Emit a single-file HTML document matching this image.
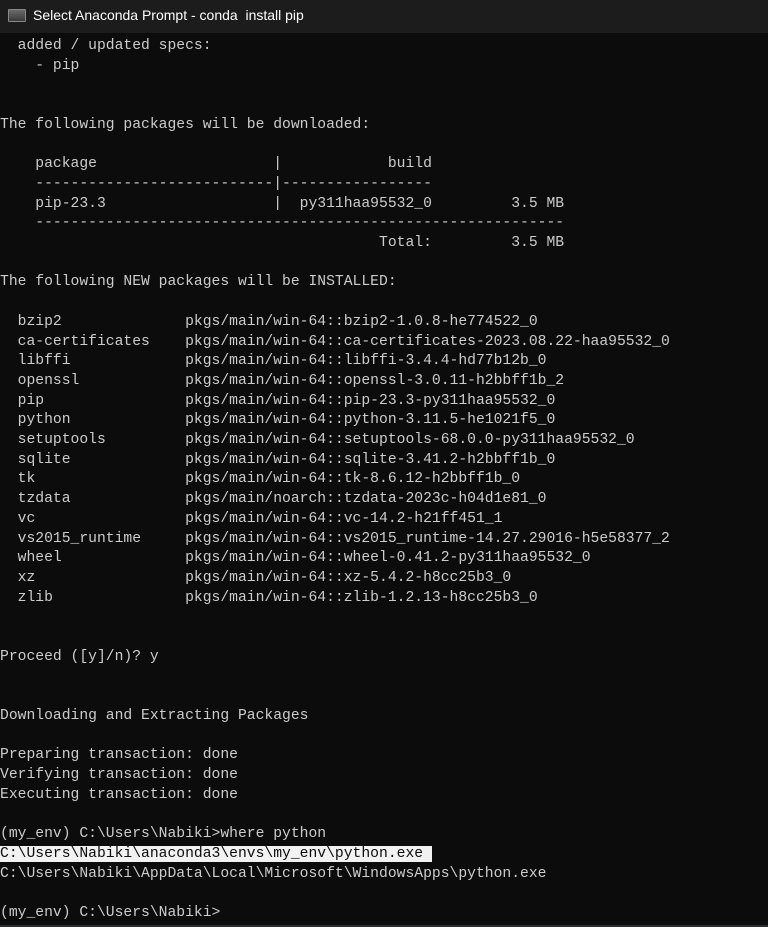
<!DOCTYPE html>
<html><head><meta charset="utf-8"><style>
html,body{margin:0;padding:0;width:768px;height:927px;overflow:hidden;background:#0c0c0c}
.t{position:absolute;left:0;top:0;width:768px;height:33px;background:#1c1c1c}
.ic{position:absolute;left:8px;top:9px;width:18px;height:13px;background:linear-gradient(#6a6a6a,#3a3a3a);border:1px solid #888;box-sizing:border-box;border-radius:1px}
.tt{position:absolute;left:33px;top:7px;color:#fff;font:14px "Liberation Sans",sans-serif}
pre{position:absolute;left:0;top:37px;margin:0;color:#cccccc;font:14.7px/19.7px "Liberation Mono",monospace;white-space:pre}
.hl{background:#f2f2f2;color:#0c0c0c;padding-right:9px}
.b{position:absolute;left:0;bottom:0;width:768px;height:2px;background:#2a2f38}
</style></head><body>
<div class="t"><div class="ic"></div><div class="tt">Select Anaconda Prompt - conda&nbsp; install pip</div></div>
<pre>  added / updated specs:
    - pip


The following packages will be downloaded:

    package                    |            build
    ---------------------------|-----------------
    pip-23.3                   |  py311haa95532_0         3.5 MB
    ------------------------------------------------------------
                                           Total:         3.5 MB

The following NEW packages will be INSTALLED:

  bzip2              pkgs/main/win-64::bzip2-1.0.8-he774522_0
  ca-certificates    pkgs/main/win-64::ca-certificates-2023.08.22-haa95532_0
  libffi             pkgs/main/win-64::libffi-3.4.4-hd77b12b_0
  openssl            pkgs/main/win-64::openssl-3.0.11-h2bbff1b_2
  pip                pkgs/main/win-64::pip-23.3-py311haa95532_0
  python             pkgs/main/win-64::python-3.11.5-he1021f5_0
  setuptools         pkgs/main/win-64::setuptools-68.0.0-py311haa95532_0
  sqlite             pkgs/main/win-64::sqlite-3.41.2-h2bbff1b_0
  tk                 pkgs/main/win-64::tk-8.6.12-h2bbff1b_0
  tzdata             pkgs/main/noarch::tzdata-2023c-h04d1e81_0
  vc                 pkgs/main/win-64::vc-14.2-h21ff451_1
  vs2015_runtime     pkgs/main/win-64::vs2015_runtime-14.27.29016-h5e58377_2
  wheel              pkgs/main/win-64::wheel-0.41.2-py311haa95532_0
  xz                 pkgs/main/win-64::xz-5.4.2-h8cc25b3_0
  zlib               pkgs/main/win-64::zlib-1.2.13-h8cc25b3_0


Proceed ([y]/n)? y


Downloading and Extracting Packages

Preparing transaction: done
Verifying transaction: done
Executing transaction: done

(my_env) C:\Users\Nabiki&gt;where python
<span class="hl">C:\Users\Nabiki\anaconda3\envs\my_env\python.exe</span>
C:\Users\Nabiki\AppData\Local\Microsoft\WindowsApps\python.exe

(my_env) C:\Users\Nabiki&gt;</pre>
<div class="b"></div>
</body></html>
